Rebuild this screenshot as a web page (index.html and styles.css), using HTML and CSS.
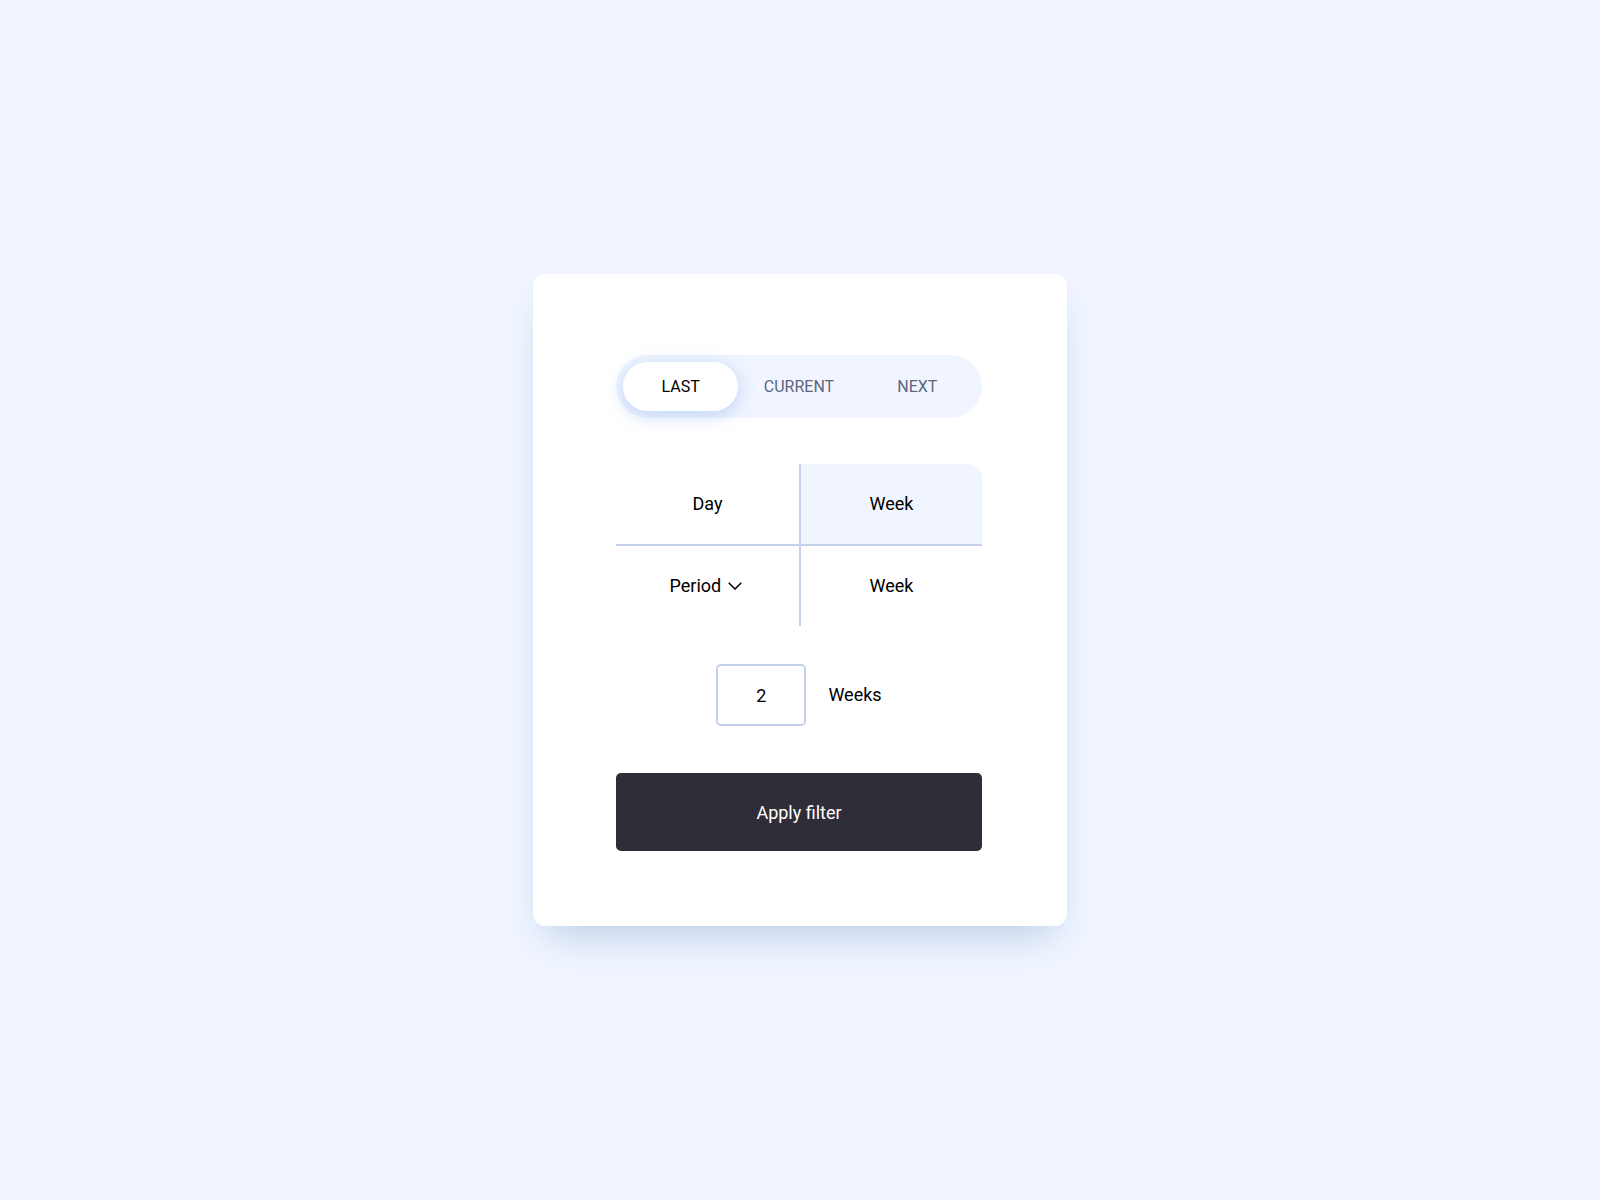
FILE: index.html
```html
<!DOCTYPE html>
<html lang="en">
<head>
    <meta charset="UTF-8">
    <meta name="viewport" content="width=device-width, initial-scale=1.0">
    <title>Date Filter</title>
    <link rel="stylesheet" href="styles.css">
</head>
<body>
    <form class="card">
        <div class="toggle" role="radiogroup" aria-label="Range">
            <label class="toggle-item"><input type="radio" name="range" value="last" checked><span>LAST</span></label>
            <label class="toggle-item"><input type="radio" name="range" value="current"><span>CURRENT</span></label>
            <label class="toggle-item"><input type="radio" name="range" value="next"><span>NEXT</span></label>
        </div>

        <div class="units">
            <label class="unit"><input type="radio" name="unit" value="day"><span>Day</span></label>
            <label class="unit"><input type="radio" name="unit" value="week" checked><span>Week</span></label>
            <div class="unit unit-select">
                <select id="period" name="period" aria-label="Period">
                    <option>Period</option>
                </select>
                <svg class="chevron" viewBox="0 0 14 8" width="14" height="8" aria-hidden="true">
                    <path d="M0.7 0.7 L7 7 L13.3 0.7" fill="none" stroke="#000" stroke-width="1.5"/>
                </svg>
            </div>
            <label class="unit"><input type="radio" name="unit" value="week-2"><span>Week</span></label>
        </div>

        <div class="amount">
            <input type="text" id="amount" name="amount" value="2" inputmode="numeric">
            <label for="amount">Weeks</label>
        </div>

        <button type="submit">Apply filter</button>
    </form>
</body>
</html>
```
FILE: styles.css
```css
* {
    box-sizing: border-box;
}
body {
    font-family: Roboto, sans-serif;
    font-size: 18px;
    line-height: 24px;
    color: #000;
    background-color: #f0f5ff;
    display: flex;
    align-items: center;
    justify-content: center;
    min-height: 100vh;
    margin: 0;
}
.card {
    background: white;
    width: 100%;
    max-width: 534px;
    padding: 81px 85px 75px 83px;
    border-radius: 12px;
    box-shadow: 0 26px 40px -20px rgba(70, 120, 165, 0.26), 0 14px 30px -4px rgba(120, 150, 225, 0.11);
}
input, select, button {
    font: inherit;
    color: inherit;
}
input[type="radio"] {
    appearance: none;
    position: absolute;
    margin: 0;
}

/* range toggle */
.toggle {
    display: flex;
    gap: 3px;
    padding: 7px;
    background: #f0f5ff;
    border-radius: 32px;
    font-size: 16px;
}
.toggle-item {
    flex: 1;
    cursor: pointer;
}
.toggle-item span {
    display: flex;
    align-items: center;
    justify-content: center;
    height: 49px;
    border-radius: 25px;
    color: #5d6680;
}
.toggle-item input:checked + span {
    background: white;
    color: #000;
    box-shadow: 0 4px 18px rgba(90, 140, 225, 0.34);
}

/* unit grid */
.units {
    display: grid;
    grid-template-columns: 185fr 181fr;
    margin-top: 46px;
}
.unit {
    display: flex;
    height: 80px;
    cursor: pointer;
}
.unit span {
    flex: 1;
    display: flex;
    align-items: center;
    justify-content: center;
}
.unit:nth-child(odd) {
    border-right: 2px solid #c5d1ec;
}
.unit:nth-child(-n+2) {
    height: 82px;
    border-bottom: 2px solid #c5d1ec;
}
.unit input:checked + span {
    background: #f0f5ff;
    border-top-right-radius: 14px;
}
.unit-select {
    align-items: center;
    justify-content: center;
    padding-right: 4px;
}
.unit select {
    appearance: none;
    border: none;
    background: none;
    padding: 0 20px 0 0;
    cursor: pointer;
}
.chevron {
    margin-left: -14px;
    pointer-events: none;
}

/* amount */
.amount {
    display: flex;
    align-items: center;
    justify-content: center;
    gap: 22px;
    margin-top: 38px;
}
.amount input {
    width: 90px;
    height: 62px;
    padding: 0;
    text-align: center;
    border: 2px solid #c5d1ec;
    border-radius: 5px;
    background: white;
}

button {
    display: block;
    width: 100%;
    height: 78px;
    margin-top: 47px;
    padding: 2px 0 0;
    background: #2f2e38;
    color: white;
    border: none;
    border-radius: 5px;
    cursor: pointer;
}
```
